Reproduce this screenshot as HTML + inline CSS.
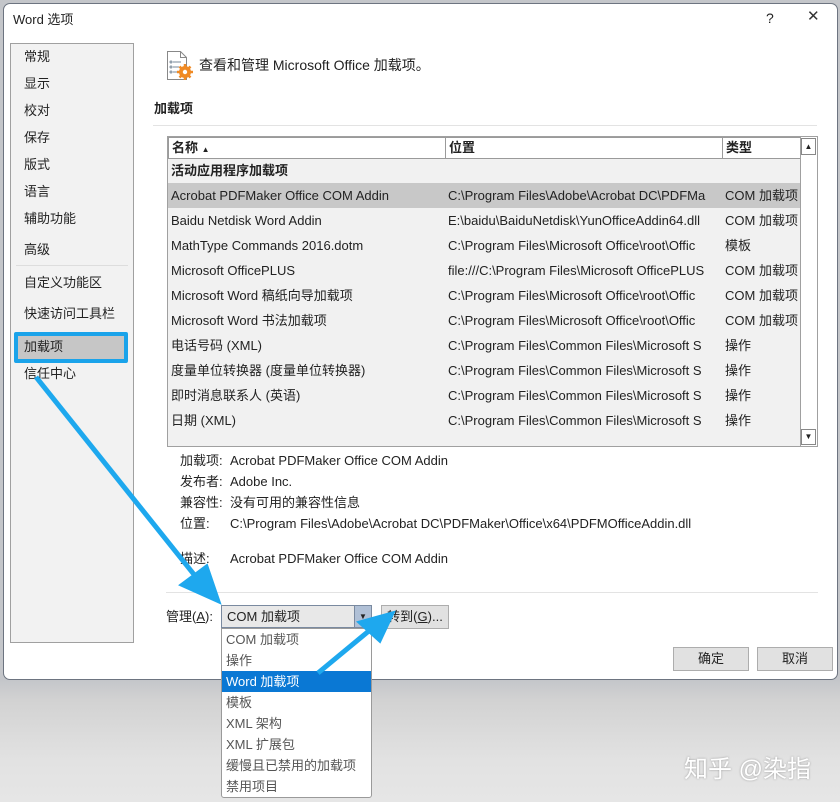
<!DOCTYPE html>
<html><head><meta charset="utf-8">
<style>
*{margin:0;padding:0;box-sizing:border-box}
body{width:840px;height:802px;overflow:hidden;position:relative;background:linear-gradient(#c4c6ca 680px,#d2d2d2 700px,#e2e2e2 760px,#e6e6e6 802px);font-family:"Liberation Sans","Noto Sans CJK SC",sans-serif;font-size:13px;color:#222}
.a{position:absolute;white-space:nowrap;line-height:17px}
#dlg{position:absolute;left:3px;top:3px;width:835px;height:677px;background:#fff;border:1px solid #6d7480;border-radius:7px}
#nav{position:absolute;left:10px;top:43px;width:124px;height:600px;background:#f2f2f2;border:1px solid #a0a0a0}
#tbl{position:absolute;left:167px;top:136px;width:651px;height:311px;background:#f1f1f1;border:1px solid #a0a0a0}
.hd{position:absolute;top:0;height:22px;line-height:18px;background:#fff;border:1px solid #9a9a9a;font-weight:bold;padding:1px 3px}
.row{position:absolute;left:0;width:632px;height:25px;line-height:25px}
.row span{position:absolute}
.btn{position:absolute;background:#e1e1e1;border:1px solid #adadad;text-align:center}
.dd div{height:21px;line-height:21px;padding-left:4px;color:#555}
</style></head><body>
<div id="dlg"></div>
<div class="a" style="left:13px;top:11px;font-size:13px">Word 选项</div>
<div class="a" style="left:766px;top:10px;font-size:14px">?</div>
<div class="a" style="left:807px;top:8px;font-size:15px;color:#333">✕</div>
<div id="nav"></div>
<div class="a" style="left:24px;top:48px">常规</div>
<div class="a" style="left:24px;top:75px">显示</div>
<div class="a" style="left:24px;top:102px">校对</div>
<div class="a" style="left:24px;top:129px">保存</div>
<div class="a" style="left:24px;top:156px">版式</div>
<div class="a" style="left:24px;top:183px">语言</div>
<div class="a" style="left:24px;top:210px">辅助功能</div>
<div class="a" style="left:24px;top:241px">高级</div>
<div class="a" style="left:16px;top:265px;width:112px;border-top:1px solid #ddd"></div>
<div class="a" style="left:24px;top:274px">自定义功能区</div>
<div class="a" style="left:24px;top:305px">快速访问工具栏</div>
<div class="a" style="left:14px;top:332px;width:114px;height:31px;background:#c6c6c6;border:4px solid #1aa3ea;border-radius:2px"></div>
<div class="a" style="left:24px;top:338px">加载项</div>
<div class="a" style="left:24px;top:365px">信任中心</div>

<svg class="a" style="left:165px;top:50px" width="32" height="32" viewBox="0 0 32 32">
<path d="M2.5 1.5h13l6 6v22h-19z" fill="#fff" stroke="#888"/><path d="M15.5 1.5v6h6" fill="none" stroke="#888"/>
<g stroke="#7a8a9a" fill="none"><circle cx="6" cy="12" r="1"/><circle cx="6" cy="17" r="1"/><circle cx="6" cy="22" r="1"/><path d="M8 12h8M8 17h6M8 22h4"/></g>
<circle cx="20" cy="22" r="6" fill="#f08a24"/>
<g stroke="#f08a24" stroke-width="2.5"><path d="M20 14v16M12 22h16M14.5 16.5l11 11M25.5 16.5l-11 11"/></g><circle cx="20" cy="22" r="2.2" fill="#fff"/>
</svg>
<div class="a" style="left:199px;top:57px;font-size:14px">查看和管理 Microsoft Office 加载项。</div>
<div class="a" style="left:154px;top:100px;font-weight:bold">加载项</div>
<div class="a" style="left:153px;top:125px;width:664px;border-top:1px solid #e3e3e3"></div>

<div id="tbl">
<div class="hd" style="left:0;width:278px">名称 <span style="font-size:8px">▲</span></div>
<div class="hd" style="left:277px;width:278px">位置</div>
<div class="hd" style="left:554px;width:79px">类型</div>
<div class="a" style="left:632px;top:0;width:17px;height:309px;background:#fff;border-left:1px solid #a0a0a0"></div>
<div class="a" style="left:633px;top:1px;width:15px;height:17px;border:1px solid #888;font-size:8px;text-align:center;line-height:15px">▲</div>
<div class="a" style="left:633px;top:292px;width:15px;height:16px;border:1px solid #888;font-size:8px;text-align:center;line-height:14px">▼</div>
<div class="row" style="top:21px;font-weight:bold"><span style="left:3px">活动应用程序加载项</span></div>
<div class="row" style="top:46px;background:#c8c8c8"><span style="left:3px">Acrobat PDFMaker Office COM Addin</span><span style="left:280px">C:\Program Files\Adobe\Acrobat DC\PDFMa</span><span style="left:557px">COM 加载项</span></div>
<div class="row" style="top:71px"><span style="left:3px">Baidu Netdisk Word Addin</span><span style="left:280px">E:\baidu\BaiduNetdisk\YunOfficeAddin64.dll</span><span style="left:557px">COM 加载项</span></div>
<div class="row" style="top:96px"><span style="left:3px">MathType Commands 2016.dotm</span><span style="left:280px">C:\Program Files\Microsoft Office\root\Offic</span><span style="left:557px">模板</span></div>
<div class="row" style="top:121px"><span style="left:3px">Microsoft OfficePLUS</span><span style="left:280px">file:///C:\Program Files\Microsoft OfficePLUS</span><span style="left:557px">COM 加载项</span></div>
<div class="row" style="top:146px"><span style="left:3px">Microsoft Word 稿纸向导加载项</span><span style="left:280px">C:\Program Files\Microsoft Office\root\Offic</span><span style="left:557px">COM 加载项</span></div>
<div class="row" style="top:171px"><span style="left:3px">Microsoft Word 书法加载项</span><span style="left:280px">C:\Program Files\Microsoft Office\root\Offic</span><span style="left:557px">COM 加载项</span></div>
<div class="row" style="top:196px"><span style="left:3px">电话号码 (XML)</span><span style="left:280px">C:\Program Files\Common Files\Microsoft S</span><span style="left:557px">操作</span></div>
<div class="row" style="top:221px"><span style="left:3px">度量单位转换器 (度量单位转换器)</span><span style="left:280px">C:\Program Files\Common Files\Microsoft S</span><span style="left:557px">操作</span></div>
<div class="row" style="top:246px"><span style="left:3px">即时消息联系人 (英语)</span><span style="left:280px">C:\Program Files\Common Files\Microsoft S</span><span style="left:557px">操作</span></div>
<div class="row" style="top:271px"><span style="left:3px">日期 (XML)</span><span style="left:280px">C:\Program Files\Common Files\Microsoft S</span><span style="left:557px">操作</span></div>
</div>

<div class="a" style="left:180px;top:452px">加载项:</div><div class="a" style="left:230px;top:452px">Acrobat PDFMaker Office COM Addin</div>
<div class="a" style="left:180px;top:473px">发布者:</div><div class="a" style="left:230px;top:473px">Adobe Inc.</div>
<div class="a" style="left:180px;top:494px">兼容性:</div><div class="a" style="left:230px;top:494px">没有可用的兼容性信息</div>
<div class="a" style="left:180px;top:515px">位置:</div><div class="a" style="left:230px;top:515px">C:\Program Files\Adobe\Acrobat DC\PDFMaker\Office\x64\PDFMOfficeAddin.dll</div>
<div class="a" style="left:180px;top:550px">描述:</div><div class="a" style="left:230px;top:550px">Acrobat PDFMaker Office COM Addin</div>
<div class="a" style="left:166px;top:592px;width:652px;border-top:1px solid #e3e3e3"></div>

<div class="a" style="left:166px;top:608px">管理(<u>A</u>):</div>
<div class="a" style="left:221px;top:605px;width:151px;height:23px;background:#e8e8e8;border:1px solid #7a8aa0"></div>
<div class="a" style="left:227px;top:608px;font-size:13px">COM 加载项</div>
<div class="a" style="left:354px;top:606px;width:17px;height:21px;background:#b0c0d6;border-left:1px solid #7a8aa0;font-size:8px;text-align:center;line-height:21px">▼</div>
<div class="btn" style="left:381px;top:605px;width:68px;height:24px;line-height:22px">转到(<u>G</u>)...</div>
<div class="btn" style="left:673px;top:647px;width:76px;height:24px;line-height:22px">确定</div>
<div class="btn" style="left:757px;top:647px;width:76px;height:24px;line-height:22px">取消</div>

<div class="a dd" style="left:221px;top:628px;width:151px;height:170px;background:#fff;border:1px solid #9a9a9a;border-radius:0 0 3px 3px;line-height:21px">
<div>COM 加载项</div><div>操作</div><div style="background:#0a78d4;color:#fff">Word 加载项</div><div>模板</div><div>XML 架构</div><div>XML 扩展包</div><div>缓慢且已禁用的加载项</div><div>禁用项目</div>
</div>

<div class="a" style="left:684px;top:756px;font-size:24px;line-height:28px;color:#fff;text-shadow:0 0 2px #999">知乎 @染指</div>

<svg class="a" style="left:0;top:0" width="840" height="802">
<g fill="#1ea8ee" stroke="#1ea8ee">
<line x1="36" y1="377" x2="196" y2="577" stroke-width="5"/>
<polygon points="220,603 180,585 207,565" stroke-width="2"/>
<line x1="318" y1="673" x2="370" y2="630" stroke-width="5"/>
<polygon points="394,612 358,622 380,642" stroke-width="2"/>
</g>
</svg>
</body></html>
